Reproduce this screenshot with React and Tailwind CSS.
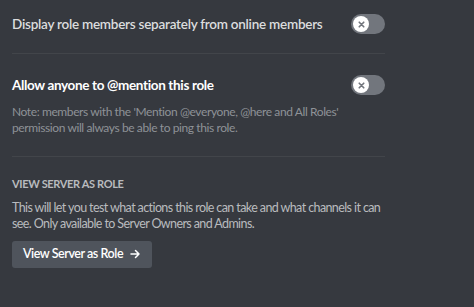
import React from 'react';

const Toggle = () => (
  <div className="flex h-5 w-[34px] shrink-0 items-center rounded-full bg-[#72767d] px-[2px]">
    <div className="flex h-4 w-4 items-center justify-center rounded-full bg-white">
      <svg viewBox="0 0 12 12" className="h-[9px] w-[9px]">
        <path d="M3 3 L9 9 M9 3 L3 9" stroke="#72767d" strokeWidth="2.2" strokeLinecap="round" />
      </svg>
    </div>
  </div>
);

export default function App() {
  return (
    <div
      className="h-[307px] w-[474px] overflow-hidden bg-[#36393f] px-3"
      style={{ fontFamily: 'Lato, "Noto Sans", sans-serif' }}
    >
      <div className="w-[373px]">
        <div className="flex items-center justify-between pt-[14px] pb-[19px]">
          <span className="whitespace-nowrap text-[13.5px] font-semibold tracking-[-0.25px] text-[#dcddde]">
            Display role members separately from online members
          </span>
          <Toggle />
        </div>
        <div className="h-px bg-[#42454a]" />

        <div className="pt-[21px] pb-[20px]">
          <div className="flex items-center justify-between">
            <span className="whitespace-nowrap text-[13.5px] font-bold tracking-[-0.35px] text-[#ffffff]">
              Allow anyone to @mention this role
            </span>
            <Toggle />
          </div>
          <p className="mt-[8px] w-[340px] text-[12px] leading-4 tracking-[-0.4px] text-[#8e9297]">
            Note: members with the 'Mention @everyone, @here and All Roles' permission will always be able to ping this role.
          </p>
        </div>
        <div className="h-px bg-[#42454a]" />

        <div className="pt-[19px]">
          <h3 className="text-[11px] font-bold uppercase leading-4 tracking-[-0.35px] text-[#b9bbbe]">View Server as Role</h3>
          <p className="mt-[8px] w-[380px] text-[12.5px] leading-4 tracking-[-0.6px] text-[#b9bbbe]">
            This will let you test what actions this role can take and what channels it can see. Only available to Server Owners and Admins.
          </p>
          <button className="mt-[9px] flex h-[27px] w-[140px] items-center justify-center gap-[6px] rounded-[3px] bg-[#4f545c] text-[12.5px] font-semibold tracking-[-0.45px] text-white">
            View Server as Role
            <svg viewBox="0 0 12 12" className="h-3 w-3">
              <path d="M2 6 H10 M6.5 2.5 L10 6 L6.5 9.5" stroke="white" strokeWidth="1.5" fill="none" strokeLinecap="round" strokeLinejoin="round" />
            </svg>
          </button>
        </div>
      </div>
    </div>
  );
}
